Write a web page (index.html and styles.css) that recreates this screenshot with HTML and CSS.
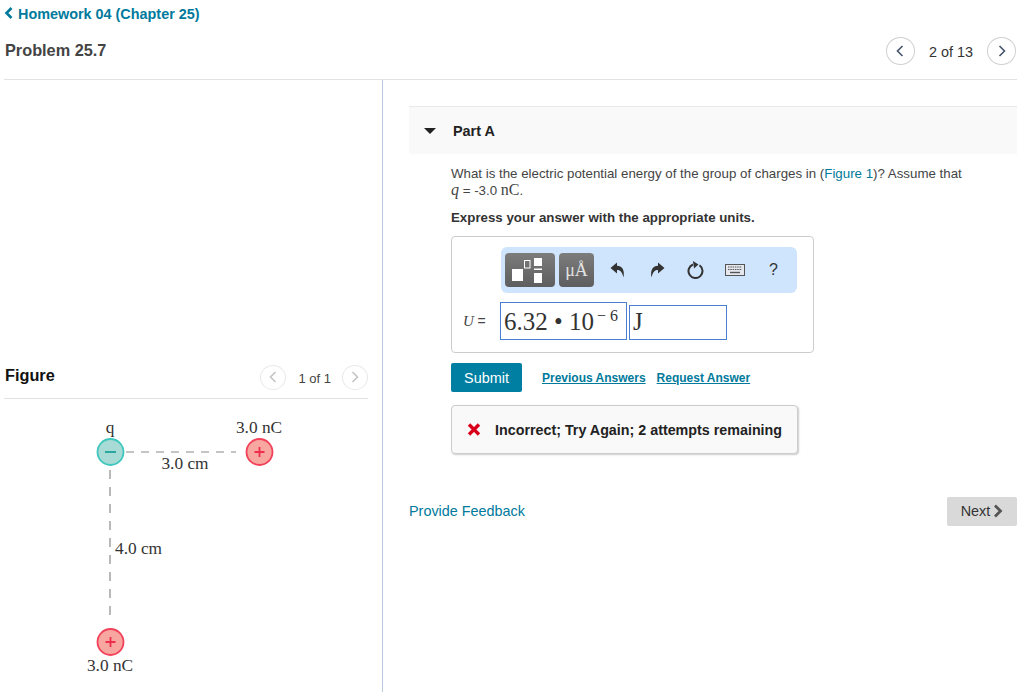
FILE: index.html
```html
<!DOCTYPE html>
<html lang="en">
<head>
    <meta charset="UTF-8">
    <title>Problem 25.7</title>
    <link rel="stylesheet" href="styles.css">
</head>
<body>
    <div class="header">
        <a class="back-link" href="#">
            <svg class="back-icon" width="9" height="12" viewBox="0 0 9 12"><path d="M7.500 1 2.500 6l5 5" fill="none" stroke="#007a9c" stroke-width="2.600"/></svg>
            Homework 04 (Chapter 25)
        </a>
        <div class="title-row">
            <h1>Problem 25.7</h1>
            <div class="pager">
                <span class="round-btn"><svg width="10" height="14" viewBox="0 0 10 14"><path d="M7.500 2 2.500 7l5 5" fill="none" stroke="#44546a" stroke-width="1.600"/></svg></span>
                <span class="pager-text">2 of 13</span>
                <span class="round-btn"><svg width="10" height="14" viewBox="0 0 10 14"><path d="M2.500 2l5 5-5 5" fill="none" stroke="#44546a" stroke-width="1.600"/></svg></span>
            </div>
        </div>
    </div>

    <div class="columns">
        <div class="left">
            <div class="figure-head">
                <h2>Figure</h2>
                <div class="figure-pager">
                    <span class="round-btn small"><svg width="10" height="14" viewBox="0 0 10 14"><path d="M7.500 2 2.500 7l5 5" fill="none" stroke="#c4c4c4" stroke-width="1.600"/></svg></span>
                    <span class="figure-count">1 of 1</span>
                    <span class="round-btn small"><svg width="10" height="14" viewBox="0 0 10 14"><path d="M2.500 2l5 5-5 5" fill="none" stroke="#c4c4c4" stroke-width="1.600"/></svg></span>
                </div>
            </div>
            <svg class="figure" width="382" height="293" viewBox="0 0 382 293">
                <line x1="126" y1="53" x2="236" y2="53" stroke="#8a8a8a" stroke-width="1.200" stroke-dasharray="8 7"/>
                <line x1="110" y1="71" x2="110" y2="224" stroke="#8a8a8a" stroke-width="1.200" stroke-dasharray="9 8"/>
                <circle cx="110.500" cy="53" r="13" fill="#a9dbd6" stroke="#3fc7bd" stroke-width="1.800"/>
                <line x1="105" y1="53" x2="116" y2="53" stroke="#2aa79e" stroke-width="2"/>
                <circle cx="259.500" cy="53" r="13" fill="#f8a6a0" stroke="#f2415a" stroke-width="1.800"/>
                <path d="M254.500 53h10M259.500 48v10" stroke="#ee2f4c" stroke-width="1.800"/>
                <circle cx="110.500" cy="243" r="13" fill="#f8a6a0" stroke="#f2415a" stroke-width="1.800"/>
                <path d="M105.500 243h10M110.500 238v10" stroke="#ee2f4c" stroke-width="1.800"/>
                <g class="fig-text">
                    <text x="110" y="34" text-anchor="middle">q</text>
                    <text x="259" y="34" text-anchor="middle">3.0 nC</text>
                    <text x="185" y="70" text-anchor="middle">3.0 cm</text>
                    <text x="115" y="155">4.0 cm</text>
                    <text x="110" y="272" text-anchor="middle">3.0 nC</text>
                </g>
            </svg>
        </div>

        <div class="right">
            <div class="part-head">
                <span class="triangle"></span>
                <span>Part A</span>
            </div>
            <div class="part-body">
                <p class="question">What is the electric potential energy of the group of charges in (<a href="#">Figure 1</a>)? Assume that<br><i class="math">q</i> = -3.0 <span class="math">nC</span>.</p>
                <p class="express">Express your answer with the appropriate units.</p>

                <div class="answer-box">
                    <div class="toolbar">
                        <span class="tool-btn wide">
                            <svg width="30" height="25" viewBox="0 0 30 25">
                                <rect x="0" y="11" width="11" height="12" fill="#fff"/>
                                <rect x="12.500" y="2.500" width="5.500" height="7.500" fill="none" stroke="#fff" stroke-width="1"/>
                                <rect x="22" y="0" width="8" height="8" fill="#fff"/>
                                <rect x="22" y="10.500" width="8" height="1.500" fill="#fff"/>
                                <rect x="22" y="15" width="8" height="10" fill="#fff"/>
                            </svg>
                        </span>
                        <span class="tool-btn units">μÅ</span>
                        <span class="tool-icon">
                            <svg width="16" height="16" viewBox="0 0 16 16"><path d="M7 0.500 0.500 6 7 11.500V8c3 0 5 1.500 6.500 7.500C15 8 12 4 7 3.800Z" fill="#333"/></svg>
                        </span>
                        <span class="tool-icon">
                            <svg width="16" height="16" viewBox="0 0 16 16"><path d="M9 0.500 15.500 6 9 11.500V8c-3 0-5 1.500-6.500 7.500C1 8 4 4 9 3.800Z" fill="#333"/></svg>
                        </span>
                        <span class="tool-icon">
                            <svg width="18" height="18" viewBox="0 0 18 18"><path d="M12.500 4.300A7 7 0 1 1 6 3.500" fill="none" stroke="#333" stroke-width="2"/><path d="M6 0l5.500 3.500L7 7.500Z" fill="#333"/></svg>
                        </span>
                        <span class="tool-icon">
                            <svg width="20" height="12" viewBox="0 0 20 12"><rect x=".5" y=".5" width="19" height="11" fill="#e4e8ee" stroke="#555"/><path d="M3 3h14M3 5.500h14" stroke="#555" stroke-width="1.200" stroke-dasharray="1.500 .8"/><path d="M5 8.500h10" stroke="#555" stroke-width="1.400"/></svg>
                        </span>
                        <span class="tool-icon help">?</span>
                    </div>
                    <div class="answer-row">
                        <span class="answer-label"><i>U</i> <span class="equals">=</span></span>
                        <span class="value-input">6.32 • 10<sup>− 6</sup></span>
                        <span class="unit-input">J</span>
                    </div>
                </div>

                <div class="actions">
                    <button class="submit">Submit</button>
                    <a href="#">Previous Answers</a>
                    <a href="#">Request Answer</a>
                </div>

                <div class="feedback">
                    <svg width="14" height="13" viewBox="0 0 14 13"><path d="M2 1.500 12 11.500M12 1.500 2 11.500" stroke="#d9001b" stroke-width="3.400"/></svg>
                    <span>Incorrect; Try Again; 2 attempts remaining</span>
                </div>
            </div>

            <div class="bottom-row">
                <a href="#">Provide Feedback</a>
                <span class="next">Next
                    <svg width="10" height="14" viewBox="0 0 10 14"><path d="M2 1.500 7.500 7 2 12.500" fill="none" stroke="#555" stroke-width="2.800"/></svg>
                </span>
            </div>
        </div>
    </div>
</body>
</html>
```
FILE: styles.css
```css
html, body {
    margin: 0;
    padding: 0;
    height: 692px;
    overflow: hidden;
}

body {
    font-family: "Liberation Sans", Arial, sans-serif;
    font-size: 14.4px;
    color: #333;
    background: white;
}

a {
    color: #007a9c;
    text-decoration: none;
}

.header {
    height: 79px;
    margin: 0 7px 0 4px;
    border-bottom: 1px solid #e2e2e2;
}

.back-link {
    display: block;
    padding-top: 6px;
    height: 16px;
    line-height: 16px;
    font-weight: bold;
}

.back-icon {
    margin-right: 1px;
}

.title-row {
    display: flex;
    justify-content: space-between;
    align-items: center;
    height: 28px;
    margin-top: 15px;
}

.title-row h1 {
    margin: 0 0 2px 1px;
    font-size: 16.300px;
    color: #444;
}

.pager {
    display: flex;
    align-items: center;
    gap: 14px;
    margin-right: 1px;
}

.pager-text {
    padding-top: 2px;
    color: #333;
}

.round-btn {
    display: flex;
    align-items: center;
    justify-content: center;
    box-sizing: border-box;
    width: 29px;
    height: 28px;
    border: 1px solid #d0d0d0;
    border-radius: 50%;
}

.round-btn.small {
    width: 26px;
    height: 25px;
    border-color: #e8e8e8;
}

.columns {
    display: flex;
    height: 612px;
}

.left {
    width: 382px;
    border-right: 1px solid #b9cadf;
}

.figure-head {
    display: flex;
    justify-content: space-between;
    align-items: center;
    height: 38px;
    margin: 280px 14px 0 4px;
    border-bottom: 1px solid #e2e2e2;
}

.figure-head h2 {
    margin: 0 0 8px 1px;
    font-size: 16.300px;
    color: #111;
}

.figure-pager {
    display: flex;
    align-items: center;
    gap: 11px;
    margin-bottom: 4px;
}

.figure-count {
    padding: 3px 0 0 1px;
    font-size: 13px;
    color: #444;
}

.figure {
    display: block;
}

.fig-text text {
    font-family: "Liberation Serif", serif;
    font-size: 17.300px;
    fill: #333;
}

.right {
    flex: 1;
    padding: 26px 7px 0 26px;
}

.part-head {
    display: flex;
    align-items: center;
    height: 48px;
    box-sizing: border-box;
    padding-left: 15px;
    background: #f9f9f9;
    border-top: 1px solid #e8e8e8;
    font-weight: bold;
    color: #222;
}

.triangle {
    width: 0;
    height: 0;
    margin-right: 17px;
    border-left: 6px solid transparent;
    border-right: 6px solid transparent;
    border-top: 6px solid #222;
}

.part-body {
    padding-left: 42px;
}

.question {
    margin: 12px 0 0;
    width: 530px;
    font-size: 13.300px;
    line-height: 16px;
    color: #444;
}

.math {
    font-family: "Liberation Serif", serif;
    font-size: 16px;
}

.express {
    margin: 11px 0 0;
    font-size: 13.300px;
    font-weight: bold;
    line-height: 16px;
    color: #333;
}

.answer-box {
    box-sizing: border-box;
    width: 363px;
    height: 117px;
    margin-top: 10px;
    padding: 10px 16px 0 11px;
    border: 1px solid #ccc;
    border-radius: 4px;
}

.toolbar {
    display: flex;
    align-items: center;
    box-sizing: border-box;
    width: 296px;
    height: 46px;
    margin-left: 38px;
    padding-left: 4px;
    background: #cfe5fd;
    border-radius: 6px;
}

.tool-btn {
    display: flex;
    align-items: center;
    justify-content: center;
    box-sizing: border-box;
    height: 34px;
    background: linear-gradient(#7c7c7c, #5e5e5e);
    border-radius: 4px;
    color: white;
}

.tool-btn.wide {
    width: 50px;
    margin-right: 4px;
}

.tool-btn.wide svg {
    margin-right: 6px;
}

.tool-btn.units {
    width: 35px;
    margin-right: 4px;
    font-family: "Liberation Serif", serif;
    font-size: 18px;
    color: #e2e2e2;
}

.tool-icon {
    display: flex;
    align-items: center;
    justify-content: center;
    width: 39px;
}

.tool-icon.help {
    font-size: 16px;
    color: #333;
}

.answer-row {
    display: flex;
    align-items: center;
    height: 38px;
    margin-top: 9px;
    font-family: "Liberation Serif", serif;
}

.answer-label {
    width: 37px;
    font-size: 15px;
    color: #444;
}

.equals {
    font-family: "Liberation Sans", Arial, sans-serif;
    font-size: 14px;
}

.value-input, .unit-input {
    box-sizing: border-box;
    display: block;
    border: 1px solid #4a7fd0;
    font-size: 25px;
    color: #333;
    padding-left: 3px;
}

.value-input {
    width: 127px;
    height: 38px;
    line-height: 38px;
    white-space: nowrap;
}

.value-input sup {
    font-size: 16px;
    line-height: 0;
    margin-left: 3px;
    vertical-align: 9px;
}

.unit-input {
    width: 98px;
    height: 35px;
    line-height: 32px;
    margin: 3px 0 0 2px;
}

.actions {
    display: flex;
    align-items: center;
    margin-top: 10px;
}

.actions a {
    margin-right: 11px;
    font-size: 12px;
    font-weight: bold;
    text-decoration: underline;
}

.submit {
    width: 71px;
    height: 29px;
    margin-right: 20px;
    padding: 0;
    background: #007fa3;
    border: none;
    border-radius: 2px;
    font-family: inherit;
    font-size: 14.400px;
    color: white;
}

.feedback {
    display: flex;
    align-items: center;
    gap: 14px;
    box-sizing: border-box;
    width: 347px;
    height: 49px;
    margin-top: 13px;
    padding-left: 15px;
    background: #f9f9f9;
    border: 1px solid #ccc;
    border-radius: 4px;
    box-shadow: 1px 1px 2px rgba(0, 0, 0, 0.2);
    font-size: 14.300px;
    font-weight: bold;
    color: #222;
}

.bottom-row {
    display: flex;
    justify-content: space-between;
    align-items: center;
    margin-top: 43px;
}

.bottom-row a {
    margin-bottom: 2px;
}

.next {
    display: flex;
    align-items: center;
    justify-content: center;
    gap: 3px;
    box-sizing: border-box;
    width: 70px;
    height: 29px;
    padding-bottom: 1px;
    background: #d9d9d9;
    border-radius: 2px;
    color: #333;
}
```
